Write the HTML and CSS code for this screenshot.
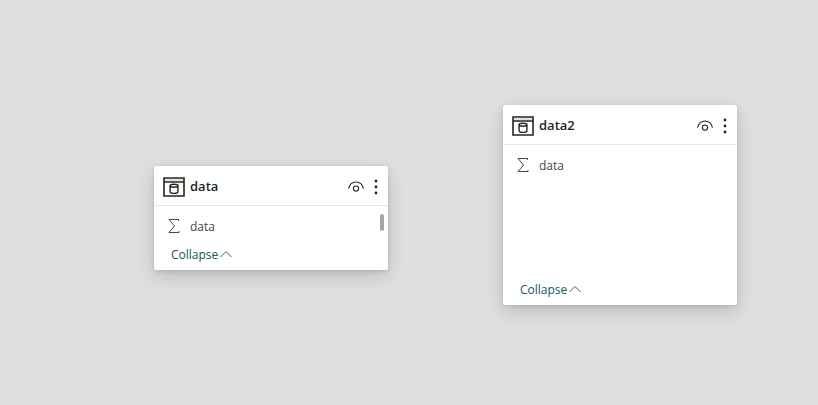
FILE: index.html
```html
<!DOCTYPE html>
<html lang="en">
<head>
	<meta charset="UTF-8">
	<title>Model view</title>
	<link rel="stylesheet" href="styles.css">
</head>
<body>
<!-- shared icons -->
<svg class="sprite" aria-hidden="true">
	<symbol id="icon-table" viewBox="0 0 22 20">
		<path d="M1 1h20v18H1zM1 5h20" fill="none" stroke="#252423" stroke-width="1.6"/>
		<path d="M2 3h18" stroke="#c8c6c4" stroke-width="1"/>
		<ellipse cx="11" cy="8.8" rx="3.9" ry="1.5" fill="none" stroke="#252423" stroke-width="1.4"/>
		<path d="M7.1 8.8v6c0 .9 1.7 1.6 3.9 1.6s3.9-.7 3.9-1.6v-6" fill="none" stroke="#252423" stroke-width="1.4"/>
	</symbol>
	<symbol id="icon-eye" viewBox="0 0 16 12">
		<path d="M.5 7.5C1.5 3.5 4.5 1 8 1s6.5 2.5 7.5 6.5" fill="none" stroke="#252423" stroke-width="1.1"/>
		<circle cx="8" cy="7.6" r="2.6" fill="none" stroke="#252423" stroke-width="1.1"/>
	</symbol>
	<symbol id="icon-more" viewBox="0 0 4 16">
		<circle cx="2" cy="2" r="1.4" fill="#252423"/>
		<circle cx="2" cy="8" r="1.4" fill="#252423"/>
		<circle cx="2" cy="14" r="1.4" fill="#252423"/>
	</symbol>
	<symbol id="icon-sum" viewBox="0 0 12 16">
		<path d="M10.5 3V1.5H1L6.5 8 1 14.5h10V13" fill="none" stroke="#484644"/>
	</symbol>
	<symbol id="icon-up" viewBox="0 0 12 8">
		<path d="M.5 7L6 1.500 11.500 7" fill="none" stroke="#484644" stroke-width=".9"/>
	</symbol>
</svg>
<main class="canvas">
	<section class="card card-data">
		<header class="card-header">
			<svg class="icon-table"><use href="#icon-table"/></svg>
			<h2 class="card-title">data</h2>
			<button class="icon-btn" type="button" aria-label="Hide data"><svg class="icon-eye"><use href="#icon-eye"/></svg></button>
			<button class="icon-btn" type="button" aria-label="More options"><svg class="icon-more"><use href="#icon-more"/></svg></button>
		</header>
		<div class="card-body">
			<ul class="fields">
				<li class="field"><svg class="icon-sum"><use href="#icon-sum"/></svg>data</li>
			</ul>
			<div class="scroll-thumb"></div>
		</div>
		<button class="collapse" type="button">Collapse<svg class="icon-up"><use href="#icon-up"/></svg></button>
	</section>
	<section class="card card-data2">
		<header class="card-header">
			<svg class="icon-table"><use href="#icon-table"/></svg>
			<h2 class="card-title">data2</h2>
			<button class="icon-btn" type="button" aria-label="Hide data2"><svg class="icon-eye"><use href="#icon-eye"/></svg></button>
			<button class="icon-btn" type="button" aria-label="More options"><svg class="icon-more"><use href="#icon-more"/></svg></button>
		</header>
		<div class="card-body">
			<ul class="fields">
				<li class="field"><svg class="icon-sum"><use href="#icon-sum"/></svg>data</li>
			</ul>
		</div>
		<button class="collapse" type="button">Collapse<svg class="icon-up"><use href="#icon-up"/></svg></button>
	</section>
</main>
</body>
</html>
```
FILE: styles.css
```css
* {
	box-sizing: border-box;
}
body {
	margin: 0;
	background-color: #e1dfdd;
	color: #252423;
	font-family: "Segoe UI", "Open Sans", sans-serif;
	font-size: 12px;
}
.sprite {
	position: absolute;
	width: 0;
	height: 0;
}
.canvas {
	position: relative;
	min-height: 100vh;
}
/* tables are placed freely on the canvas */
.card {
	position: absolute;
	display: flex;
	flex-direction: column;
	width: 234px;
	background-color: #fff;
	border-radius: 2px;
	box-shadow: 0 6px 18px rgba(0, 0, 0, .16), 0 1px 4px rgba(0, 0, 0, .12);
}
.card-data {
	left: 154px;
	top: 166px;
}
.card-data2 {
	left: 503px;
	top: 105px;
	min-height: 200px;
}
.card-header {
	display: flex;
	align-items: center;
	gap: 10px;
	height: 40px;
	padding: 2px 10px 0 9px;
	border-bottom: 1px solid #e6e6e6;
}
.card-title {
	flex: 1;
	margin: 0 0 0 -5px;
	padding-bottom: 2px;
	font-size: 13px;
	font-weight: 600;
	line-height: 18px;
}
button {
	border: none;
	padding: 0;
	background: none;
	font: inherit;
	cursor: pointer;
}
.icon-btn {
	display: flex;
}
.icon-table {
	width: 22px;
	height: 20px;
}
.icon-eye {
	width: 16px;
	height: 12px;
}
.icon-more {
	width: 4px;
	height: 16px;
}
.card-body {
	display: flex;
	flex: 1;
	padding: 6px 4px 0 14px;
}
.fields {
	flex: 1;
	margin: 0;
	padding: 0;
	list-style: none;
}
.field {
	display: flex;
	align-items: center;
	gap: 10px;
	height: 28px;
	color: #484644;
}
.icon-sum {
	width: 12px;
	height: 16px;
}
.scroll-thumb {
	width: 4px;
	height: 17px;
	margin-top: 2px;
	border-radius: 2px;
	background-color: #a6a6a6;
}
.collapse {
	display: flex;
	align-items: center;
	align-self: flex-start;
	gap: 2px;
	height: 30px;
	padding: 0 0 2px 17px;
	color: #0f5a5a;
}
.icon-up {
	width: 12px;
	height: 8px;
}
```
